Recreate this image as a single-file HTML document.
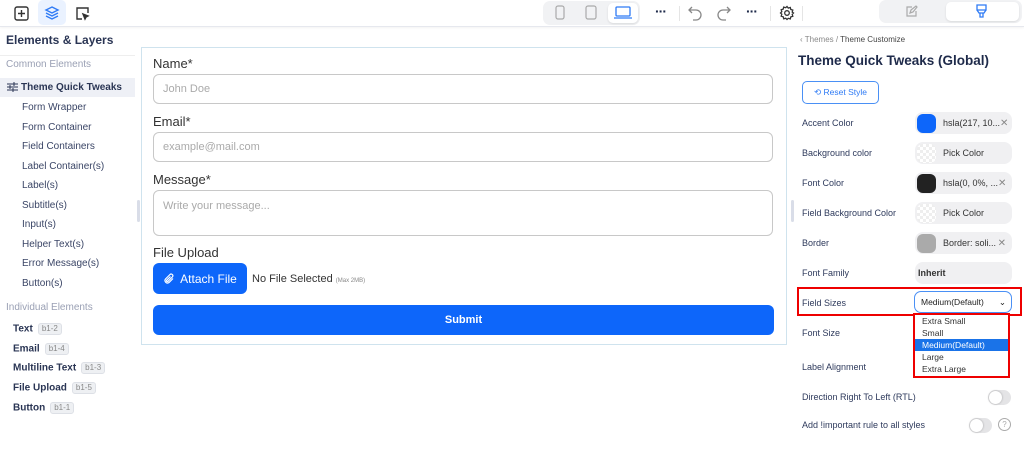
<!DOCTYPE html>
<html><head><style>
*{box-sizing:border-box;margin:0;padding:0}
body{width:1024px;height:460px;background:#fff;font-family:"Liberation Sans",sans-serif;position:relative;overflow:hidden;color:#1e2a4a}
.a{position:absolute}
.top{left:0;top:0;width:1024px;height:27px;border-bottom:1px solid #e6e8ee;box-shadow:0 1px 2px rgba(0,0,0,.05)}
.side{font-size:10px;color:#3a4566;white-space:nowrap}
.lbl{font-size:13px;color:#333}
.inp{left:153px;width:620px;border:1px solid #c8c8c8;border-radius:6px;font-size:11px;color:#aaa;padding:0 9px;display:flex;align-items:center}
.rl{left:802px;font-size:9px;color:#2e3a5c}
.pill{left:915px;width:97px;height:22px;background:#f0f0f2;border-radius:8px;font-size:9px;color:#333;display:flex;align-items:center;white-space:nowrap;overflow:hidden}
.sw{width:19px;height:19px;border-radius:6px;margin:0 7px 0 2px;flex:none}
.chk{background:repeating-conic-gradient(#eee 0 25%,#fff 0 50%) 0 0/6px 6px}
.x{margin-left:auto;margin-right:6px;color:#888;font-size:10px}
.tag{display:inline-block;vertical-align:middle;background:#eef0f3;border:1px solid #dde0e6;border-radius:3px;font-size:8px;line-height:10px;color:#888;padding:0 3px;margin-left:5px;font-weight:normal}
.ie{left:13px;font-size:10px;font-weight:bold;color:#2a3554;line-height:12px;white-space:nowrap}
.tog{width:23px;height:15px;border-radius:8px;background:#e4e4e6;}
.tog:after{content:"";display:block;width:13px;height:13px;margin:1px;background:#fff;border-radius:50%;box-shadow:0 0 2px rgba(0,0,0,.3)}
</style></head><body>
<div class="a top"></div>
<svg class="a" style="left:14px;top:6px" width="15" height="15" viewBox="0 0 15 15" fill="none" stroke="#333" stroke-width="1.4"><rect x="1" y="1" width="13" height="13" rx="2"/><path d="M7.5 4v7M4 7.5h7"/></svg>
<div class="a" style="left:38px;top:0;width:28px;height:25px;background:#eaf2ff;border-radius:5px"></div>
<svg class="a" style="left:44px;top:5px" width="16" height="16" viewBox="0 0 16 16" fill="none" stroke="#2f7bf5" stroke-width="1.4"><path d="M8 2 14 5 8 8 2 5z"/><path d="M2 8l6 3 6-3M2 11l6 3 6-3"/></svg>
<svg class="a" style="left:75px;top:6px" width="15" height="15" viewBox="0 0 15 15" fill="none" stroke="#333" stroke-width="1.4"><path d="M7 13H2V2h11v5"/><path d="M8 8l5 2-2 1-1 2z" fill="#333"/></svg>
<div class="a" style="left:543px;top:1px;width:97px;height:24px;background:#f1f2f4;border-radius:7px"></div>
<div class="a" style="left:608px;top:3px;width:30px;height:20px;background:#fff;border-radius:5px;box-shadow:0 1px 2px rgba(0,0,0,.1)"></div>
<svg class="a" style="left:555px;top:5px" width="10" height="15" fill="none" stroke="#aaa" stroke-width="1.2"><rect x="1" y="1" width="8" height="13" rx="2"/></svg>
<svg class="a" style="left:585px;top:5px" width="12" height="15" fill="none" stroke="#aaa" stroke-width="1.2"><rect x="1" y="1" width="10" height="13" rx="2"/></svg>
<svg class="a" style="left:614px;top:6px" width="18" height="13" fill="none" stroke="#2f7bf5" stroke-width="1.3"><rect x="2" y="1" width="14" height="9" rx="1"/><path d="M0 12h18"/></svg>
<div class="a" style="left:655px;top:3px;font-size:14px;font-weight:bold;letter-spacing:-1px">···</div>
<div class="a" style="left:679px;top:6px;width:1px;height:15px;background:#e5e5e5"></div>
<svg class="a" style="left:688px;top:5px" width="14" height="16" fill="none" stroke="#888" stroke-width="1.3"><path d="M4 2 1 5l3 3M1 5h7a5 5 0 0 1 0 10H5"/></svg>
<svg class="a" style="left:717px;top:5px" width="14" height="16" fill="none" stroke="#888" stroke-width="1.3"><path d="M10 2l3 3-3 3M13 5H6a5 5 0 0 0 0 10h3"/></svg>
<div class="a" style="left:746px;top:3px;font-size:14px;font-weight:bold;letter-spacing:-1px">···</div>
<div class="a" style="left:770px;top:6px;width:1px;height:15px;background:#e5e5e5"></div>
<svg class="a" style="left:779px;top:5px" width="16" height="16" viewBox="0 0 16 16" fill="none" stroke="#333" stroke-width="1.3"><circle cx="8" cy="8" r="2.3"/><path d="M8 1.5l1.3 1.6 2-.6.5 2 2 .6-.6 2L14.5 8l-1.3 1.3.6 2-2 .6-.5 2-2-.6L8 14.5l-1.3-1.3-2 .6-.5-2-2-.6.6-2L1.5 8l1.3-1.3-.6-2 2-.6.5-2 2 .6z"/></svg>
<div class="a" style="left:802px;top:6px;width:1px;height:15px;background:#e5e5e5"></div>
<div class="a" style="left:879px;top:0;width:143px;height:23px;background:#f1f2f4;border-radius:7px"></div>
<div class="a" style="left:946px;top:2px;width:73px;height:19px;background:#fff;border-radius:5px;box-shadow:0 1px 2px rgba(0,0,0,.1)"></div>
<svg class="a" style="left:905px;top:5px" width="13" height="13" fill="none" stroke="#aaa" stroke-width="1.2"><path d="M7 2H2v9h9V6M5 8l1-3 5-4 1 1-4 5z"/></svg>
<svg class="a" style="left:976px;top:4px" width="11" height="14" fill="none" stroke="#2f7bf5" stroke-width="1.3"><path d="M1 1h9v5H1zM1 6l2 3h5l2-3M4 9v4h3V9"/></svg>
<!-- left sidebar -->
<div class="a" style="left:6px;top:33px;font-size:12px;font-weight:bold;color:#2a3554">Elements &amp; Layers</div>
<div class="a" style="left:0;top:55px;width:135px;height:1px;background:#eee"></div>
<div class="a side" style="left:6px;top:59px;color:#9aa0b4">Common Elements</div>
<div class="a" style="left:0;top:78px;width:135px;height:19px;background:#eef0f6"></div>
<svg class="a" style="left:7px;top:82px" width="11" height="10" fill="none" stroke="#2a3554" stroke-width="1"><path d="M0 2h11M0 5h11M0 8h11"/><path d="M7 0v4M3 3v4M6 6v4"/></svg>
<div class="a side" style="left:21px;top:82px;font-weight:bold;color:#2a3554">Theme Quick Tweaks</div>
<div class="a side" style="left:22px;top:98px;line-height:19.5px">Form Wrapper<br>Form Container<br>Field Containers<br>Label Container(s)<br>Label(s)<br>Subtitle(s)<br>Input(s)<br>Helper Text(s)<br>Error Message(s)<br>Button(s)</div>
<div class="a" style="left:137px;top:200px;width:3px;height:22px;background:#d9dde8;border-radius:2px"></div>
<div class="a side" style="left:6px;top:302px;color:#9aa0b4">Individual Elements</div>
<div class="a ie" style="top:323px">Text<span class="tag">b1-2</span></div>
<div class="a ie" style="top:343px">Email<span class="tag">b1-4</span></div>
<div class="a ie" style="top:362px">Multiline Text<span class="tag">b1-3</span></div>
<div class="a ie" style="top:382px">File Upload<span class="tag">b1-5</span></div>
<div class="a ie" style="top:402px">Button<span class="tag">b1-1</span></div>
<!-- form -->
<div class="a" style="left:141px;top:47px;width:646px;height:298px;border:1px solid #cfe3ee"></div>
<div class="a lbl" style="left:153px;top:56px">Name*</div>
<div class="a inp" style="top:74px;height:30px">John Doe</div>
<div class="a lbl" style="left:153px;top:114px">Email*</div>
<div class="a inp" style="top:132px;height:30px">example@mail.com</div>
<div class="a lbl" style="left:153px;top:172px">Message*</div>
<div class="a inp" style="top:190px;height:46px;align-items:flex-start;padding-top:9px">Write your message...</div>
<div class="a lbl" style="left:153px;top:245px">File Upload</div>
<div class="a" style="left:153px;top:263px;width:94px;height:31px;background:#0d66fa;border-radius:6px;color:#fff;font-size:12px;display:flex;align-items:center;justify-content:center"><svg width="12" height="12" viewBox="0 0 12 12" fill="none" stroke="#fff" stroke-width="1.2" style="margin-right:5px"><path d="M10 5.5 6 9.5a2.5 2.5 0 0 1-3.5-3.5L7 1.5a1.7 1.7 0 0 1 2.4 2.4L5 8.3a.8.8 0 0 1-1.2-1.2L7.5 3.5"/></svg>Attach File</div>
<div class="a" style="left:252px;top:273px;font-size:11px;color:#333">No File Selected <span style="font-size:6px;color:#888">(Max 2MB)</span></div>
<div class="a" style="left:153px;top:305px;width:621px;height:30px;background:#0d66fa;border-radius:6px;color:#fff;font-size:11px;font-weight:bold;display:flex;align-items:center;justify-content:center">Submit</div>
<!-- right panel -->
<div class="a" style="left:791px;top:200px;width:3px;height:22px;background:#d9dde8;border-radius:2px"></div>
<div class="a" style="left:800px;top:35px;font-size:8px;color:#888">‹ Themes / <span style="color:#444">Theme Customize</span></div>
<div class="a" style="left:798px;top:53px;font-size:13.5px;font-weight:bold;color:#1e2a4a">Theme Quick Tweaks (Global)</div>
<div class="a" style="left:802px;top:81px;width:77px;height:23px;border:1px solid #4a90f5;border-radius:5px;color:#2f7bf5;font-size:8.5px;display:flex;align-items:center;justify-content:center">⟲ Reset Style</div>
<div class="a rl" style="top:118px">Accent Color</div>
<div class="a pill" style="top:112px"><span class="sw" style="background:#0d66fa"></span>hsla(217, 10...<span class="x">✕</span></div>
<div class="a rl" style="top:148px">Background color</div>
<div class="a pill" style="top:142px"><span class="sw chk"></span>Pick Color</div>
<div class="a rl" style="top:178px">Font Color</div>
<div class="a pill" style="top:172px"><span class="sw" style="background:#222"></span>hsla(0, 0%, ...<span class="x">✕</span></div>
<div class="a rl" style="top:208px">Field Background Color</div>
<div class="a pill" style="top:202px"><span class="sw chk"></span>Pick Color</div>
<div class="a rl" style="top:238px">Border</div>
<div class="a pill" style="top:232px"><span class="sw" style="background:#aaa"></span>Border: soli...<span class="x">✕</span></div>
<div class="a rl" style="top:268px">Font Family</div>
<div class="a pill" style="top:262px;padding-left:3px;font-weight:bold">Inherit</div>
<div class="a" style="left:797px;top:287px;width:225px;height:29px;border:2px solid #e00"></div>
<div class="a rl" style="top:298px">Field Sizes</div>
<div class="a" style="left:914px;top:291px;width:98px;height:22px;border:1px solid #4a90f5;border-radius:7px;font-size:8.5px;color:#222;display:flex;align-items:center;padding-left:6px">Medium(Default)<span style="margin-left:auto;margin-right:5px">⌄</span></div>
<div class="a rl" style="top:328px">Font Size</div>
<div class="a rl" style="top:362px">Label Alignment</div>
<div class="a" style="left:913px;top:313px;width:97px;height:65px;border:2px solid #e00;background:#fff"></div>
<div class="a" style="left:915px;top:315px;width:93px;font-size:8.5px;color:#333;line-height:12px">
<div style="padding-left:7px">Extra Small</div><div style="padding-left:7px">Small</div><div style="padding-left:7px;background:#1a73e8;color:#fff">Medium(Default)</div><div style="padding-left:7px">Large</div><div style="padding-left:7px">Extra Large</div></div>
<div class="a rl" style="top:392px">Direction Right To Left (RTL)</div>
<div class="a tog" style="left:988px;top:390px"></div>
<div class="a rl" style="top:420px">Add !important rule to all styles</div>
<div class="a tog" style="left:969px;top:418px"></div>
<div class="a" style="left:998px;top:418px;width:13px;height:13px;border:1px solid #aaa;border-radius:50%;font-size:8px;color:#aaa;text-align:center;line-height:11px">?</div>
</body></html>
